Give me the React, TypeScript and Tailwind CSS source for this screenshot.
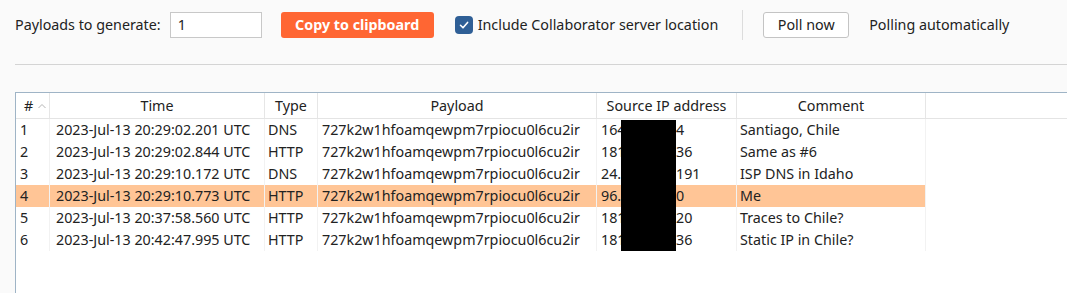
import React from "react";

const rows = [
  ["1", "2023-Jul-13 20:29:02.201 UTC", "DNS", "727k2w1hfoamqewpm7rpiocu0l6cu2ir", "164", "4", "Santiago, Chile"],
  ["2", "2023-Jul-13 20:29:02.844 UTC", "HTTP", "727k2w1hfoamqewpm7rpiocu0l6cu2ir", "181", "36", "Same as #6"],
  ["3", "2023-Jul-13 20:29:10.172 UTC", "DNS", "727k2w1hfoamqewpm7rpiocu0l6cu2ir", "24.", "191", "ISP DNS in Idaho"],
  ["4", "2023-Jul-13 20:29:10.773 UTC", "HTTP", "727k2w1hfoamqewpm7rpiocu0l6cu2ir", "96.", "0", "Me"],
  ["5", "2023-Jul-13 20:37:58.560 UTC", "HTTP", "727k2w1hfoamqewpm7rpiocu0l6cu2ir", "181", "20", "Traces to Chile?"],
  ["6", "2023-Jul-13 20:42:47.995 UTC", "HTTP", "727k2w1hfoamqewpm7rpiocu0l6cu2ir", "181", "36", "Static IP in Chile?"],
];

export default function App() {
  return (
    <div
      className="w-[1067px] h-[293px] bg-[#fafafa] text-[14.3px] text-[#222] overflow-hidden"
      style={{ fontFamily: '"Noto Sans", "Open Sans", sans-serif' }}
    >
      <div className="flex items-center h-[50px] pl-[15px]">
        <span>Payloads to generate:</span>
        <div className="ml-[9px] w-[92px] h-[26px] bg-white border border-[#c8c8c8] flex items-center pl-[7px]">1</div>
        <button className="ml-[19px] w-[153px] h-[26px] rounded-[3px] bg-[#ff6633] text-white font-bold">
          Copy to clipboard
        </button>
        <div className="ml-[21px] w-[18px] h-[18px] rounded-[4px] bg-[#2f5f96] flex items-center justify-center">
          <svg width="12" height="12" viewBox="0 0 12 12">
            <path d="M2.5 6.3 L5 8.8 L9.6 3.4" fill="none" stroke="white" strokeWidth="1.6" strokeLinecap="round" strokeLinejoin="round" />
          </svg>
        </div>
        <span className="ml-[5px]">Include Collaborator server location</span>
        <div className="ml-[24px] w-px h-[30px] bg-[#dcdcdc]" />
        <button className="ml-[20px] w-[86px] h-[26px] rounded-[3px] bg-white border border-[#c4c4c4]">Poll now</button>
        <span className="ml-[20px]">Polling automatically</span>
      </div>
      <div className="ml-[15px] mt-[14px] h-px bg-[#d4d4d4]" />
      <div className="ml-[15px] mt-[27px] relative h-[210px] bg-white border-l border-t border-[#9fb4c6]">
        <div className="flex h-[26px] border-b border-[#e4e4e4] bg-white">
          <div className="w-[34px] flex items-center pl-[8px] border-r border-[#e6e6e6]">
            <span>#</span>
            <svg className="ml-[4px]" width="10" height="8" viewBox="0 0 10 8">
              <path d="M1.5 6 L5 2.5 L8.5 6" fill="none" stroke="#b5b5b5" strokeWidth="1" />
            </svg>
          </div>
          <div className="w-[215px] flex items-center justify-center border-r border-[#e6e6e6]">Time</div>
          <div className="w-[53px] flex items-center justify-center border-r border-[#e6e6e6]">Type</div>
          <div className="w-[279px] flex items-center justify-center border-r border-[#e6e6e6]">Payload</div>
          <div className="w-[140px] flex items-center justify-center border-r border-[#e6e6e6]">Source IP address</div>
          <div className="w-[189px] flex items-center justify-center border-r border-[#e6e6e6]">Comment</div>
          <div className="flex-1" />
        </div>
        {rows.map((r) => (
          <div key={r[0]} className={"flex h-[22px] w-[910px] " + (r[0] === "4" ? "bg-[#ffc596]" : "")}>
            <div className="w-[34px] flex items-center pl-[4px] border-r border-[#f2f2f2]">{r[0]}</div>
            <div className="w-[215px] flex items-center pl-[6px] border-r border-[#f2f2f2]">{r[1]}</div>
            <div className="w-[53px] flex items-center pl-[3px] border-r border-[#f2f2f2]">{r[2]}</div>
            <div className="w-[279px] flex items-center pl-[4px] border-r border-[#f2f2f2]">{r[3]}</div>
            <div className="w-[140px] flex items-center pl-[4px] border-r border-[#f2f2f2]">
              <span className="w-[75px]">{r[4]}</span>
              <span>{r[5]}</span>
            </div>
            <div className="w-[189px] flex items-center pl-[3px] border-r border-[#f2f2f2]">{r[6]}</div>
          </div>
        ))}
        <div className="absolute left-[605px] top-[27px] w-[55px] h-[131px] bg-black" />
      </div>
    </div>
  );
}
